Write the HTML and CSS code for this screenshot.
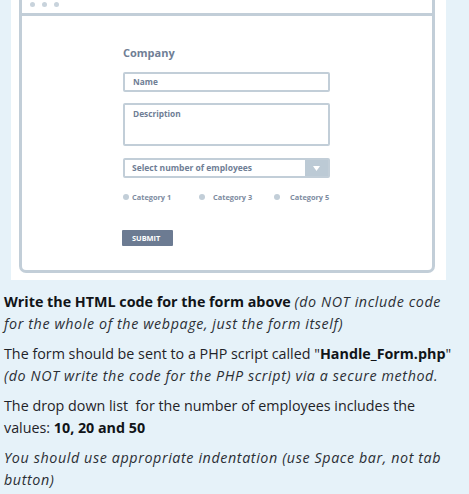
FILE: index.html
```html
<!DOCTYPE html>
<html>
<head>
<meta charset="utf-8">
<link rel="stylesheet" href="styles.css">
</head>
<body>
<div class="page">
  <div class="figure">
    <div class="window">
      <div class="topbar">
        <span class="dot"></span><span class="dot"></span><span class="dot"></span>
      </div>
      <div class="content">
        <div class="wf-title">Company</div>
        <div class="wf-input">Name</div>
        <div class="wf-textarea">Description</div>
        <div class="wf-select">
          <span class="wf-select-label">Select number of employees</span>
          <span class="wf-select-btn"><svg width="7" height="5" viewBox="0 0 7 5"><path d="M0 0H7L3.5 5Z" fill="#ffffff"/></svg></span>
        </div>
        <div class="wf-radios">
          <span class="wf-radio"><span class="wf-circle"></span>Category 1</span>
          <span class="wf-radio"><span class="wf-circle"></span>Category 3</span>
          <span class="wf-radio"><span class="wf-circle"></span>Category 5</span>
        </div>
        <div class="wf-submit">SUBMIT</div>
      </div>
    </div>
  </div>
  <div class="text">
    <p><strong>Write the HTML code for the form above</strong> <em>(do NOT include code for the whole of the webpage, just the form itself)</em></p>
    <p>The form should be sent to a PHP script called "<strong>Handle_Form.php</strong>" <em>(do NOT write the code for the PHP script) via a secure method.</em></p>
    <p>The drop down list&nbsp; for the number of employees includes the values: <strong>10, 20 and 50</strong></p>
    <p><em>You should use appropriate indentation (use Space bar, not tab button)</em></p>
  </div>
</div>
</body>
</html>
```

FILE: styles.css
```css
html, body {
  margin: 0;
  padding: 0;
  background: #e6f2f9;
}
body {
  width: 469px;
  height: 494px;
  overflow: hidden;
  font-family: "Open Sans", "Noto Sans", sans-serif;
}
.page {
  display: flex;
  flex-direction: column;
}
.figure {
  margin-left: 11px;
  width: 435px;
  height: 280px;
  background: #ffffff;
  box-sizing: border-box;
  padding-left: 8px;
}
.window {
  width: 416px;
  height: 273px;
  box-sizing: border-box;
  border: 3px solid #c2ced8;
  border-top: none;
  border-radius: 0 0 7px 7px;
  display: flex;
  flex-direction: column;
}
.topbar {
  border-bottom: 3px solid #c2ced8;
  display: flex;
  gap: 7px;
  padding-left: 8px;
  padding-top: 2px;
  box-sizing: border-box;
  height: 16px;
}
.dot {
  width: 5px;
  height: 5px;
  border-radius: 50%;
  background: #c8d3dc;
}
.content {
  padding-left: 101px;
  padding-top: 30px;
  display: flex;
  flex-direction: column;
  align-items: flex-start;
  color: #6f7e95;
  font-family: "Open Sans", sans-serif;
  font-weight: 700;
}
.wf-title {
  font-size: 11px;
  line-height: 14px;
  height: 14px;
  color: #6f7e95;
}
.wf-input, .wf-textarea, .wf-select {
  width: 207px;
  box-sizing: border-box;
  border: 2px solid #c2ced8;
  border-radius: 2px;
  font-size: 8.3px;
  color: #6f7e95;
}
.wf-input {
  margin-top: 12px;
  height: 20px;
  line-height: 16px;
  padding-left: 8px;
}
.wf-textarea {
  margin-top: 11px;
  height: 43px;
  padding-left: 8px;
  padding-top: 3px;
  line-height: 12px;
}
.wf-select {
  margin-top: 12px;
  height: 20px;
  display: flex;
  align-items: stretch;
}
.wf-select-label {
  flex: 1;
  padding-left: 7px;
  line-height: 16px;
  font-size: 8.5px;
}
.wf-select-btn {
  width: 23px;
  background: #bccad5;
  display: flex;
  align-items: center;
  justify-content: center;
}
.wf-radios {
  margin-top: 14px;
  display: flex;
  font-size: 7.4px;
  line-height: 10px;
  color: #7d8ba0;
}
.wf-radio {
  display: flex;
  align-items: center;
  gap: 3px;
  width: 76px;
}
.wf-radio:nth-child(2) { width: 75px; }
.wf-radio:nth-child(2) .wf-circle, .wf-radio:nth-child(3) .wf-circle { margin-right: 5px; }
.wf-radio:nth-child(3) .wf-circle { margin-right: 7px; }
.wf-circle {
  width: 6px;
  height: 6px;
  border-radius: 50%;
  background: #c2ced8;
}
.wf-submit {
  margin-top: 28px;
  margin-left: -1px;
  width: 51px;
  height: 16px;
  background: #6c7b92;
  border-radius: 1px;
  color: #ffffff;
  font-size: 7.4px;
  line-height: 16px;
  padding-left: 10px;
  box-sizing: border-box;
}
.text {
  width: 452px;
  padding: 11px 0 0 4px;
  font-family: "Open Sans", sans-serif;
  font-size: 14.3px;
  line-height: 22px;
  color: #1f2328;
}
.text p {
  margin: 0 0 8px 0;
}
.text strong {
  font-weight: 700;
  color: #111418;
}
.text em {
  color: #2b2f35;
  letter-spacing: 0.6px;
}
```
